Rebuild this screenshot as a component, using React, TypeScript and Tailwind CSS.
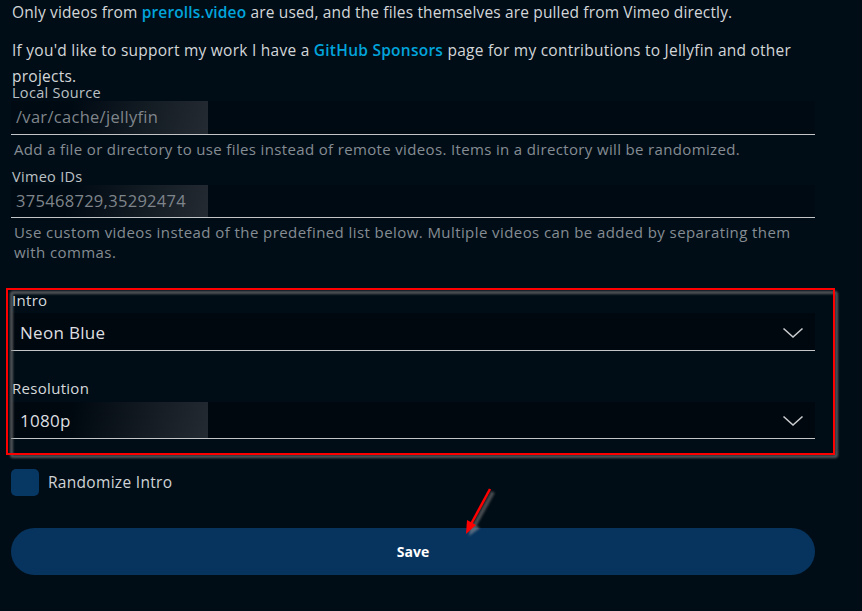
import React from "react";

const grad =
  "bg-[linear-gradient(105deg,rgba(40,46,54,0)_30%,rgba(40,46,54,0.9)_100%)] bg-no-repeat bg-[length:197px_100%]";

function Chevron() {
  return (
    <svg width="22" height="12" viewBox="0 0 22 12" className="shrink-0">
      <path d="M1.5 1.5 L11 10 L20.5 1.5" fill="none" stroke="#c9cbcd" strokeWidth="1.6" />
    </svg>
  );
}

export default function App() {
  return (
    <div className="relative min-h-[611px] w-full bg-[#010d16] font-['Open_Sans',sans-serif] text-[#d3d6d9] overflow-hidden">
      <div className="pl-[12px] w-[815px]">
        <p className="text-[15.5px] tracking-[0.15px] leading-[25px] h-[25px] whitespace-nowrap">
          Only videos from{" "}
          <span className="text-[#00a4dc] font-semibold">prerolls.video</span> are used, and the
          files themselves are pulled from Vimeo directly.
        </p>
        <p className="mt-[13px] text-[15.5px] tracking-[0.25px] leading-[25.5px] w-[795px]">
          If you'd like to support my work I have a{" "}
          <span className="text-[#00a4dc] font-semibold">GitHub Sponsors</span> page for my
          contributions to Jellyfin and other projects.
        </p>
      </div>
      <div className="pl-[11px] w-[815px]">
        <div className="mt-[-3px] h-[14px] leading-[14px] text-[14.5px] tracking-[0.3px] text-[#bcc1c5] pl-[1px]">
          Local Source
        </div>
        <div className={`mt-[1px] h-[34px] bg-[#000a12] ${grad} border-b border-[#c3c6c9] flex items-center pl-[5px] text-[16.5px] tracking-[0.3px] text-[#7f858b]`}>
          /var/cache/jellyfin
        </div>
        <div className="h-[29px] flex items-center pl-[3px] text-[15px] tracking-[0.35px] text-[#858c93] whitespace-nowrap">
          Add a file or directory to use files instead of remote videos. Items in a directory will be randomized.
        </div>
        <div className="mt-[5px] h-[16px] leading-[16px] text-[14.5px] tracking-[0.3px] text-[#bcc1c5] pl-[1px]">
          Vimeo IDs
        </div>
        <div className={`h-[33px] bg-[#000a12] ${grad} border-b border-[#c3c6c9] flex items-center pl-[5px] text-[16.5px] tracking-[0.3px] text-[#7f858b]`}>
          375468729,35292474
        </div>
        <div className="pt-[5px] pl-[3px] text-[15px] tracking-[0.42px] leading-[19.5px] text-[#858c93] w-[800px]">
          Use custom videos instead of the predefined list below. Multiple videos can be added by separating them with commas.
        </div>

        <div className="mt-[28px] h-[20px] leading-[20px] text-[15px] tracking-[0.3px] text-[#d6d9dc] pl-[1px]">Intro</div>
        <div className="mt-[3px] h-[38px] pt-[2px] bg-[#00080f] border-b border-[#c3c6c9] flex items-center justify-between pl-[9px] pr-[11px] text-[17px] tracking-[0.3px] text-[#dedfe0]">
          <span>Neon Blue</span>
          <Chevron />
        </div>
        <div className="mt-[27px] h-[20px] leading-[20px] text-[15px] tracking-[0.3px] text-[#d6d9dc] pl-[1px]">Resolution</div>
        <div className={`mt-[4px] h-[37px] pt-[1px] bg-[#00080f] ${grad} border-b border-[#c3c6c9] flex items-center justify-between pl-[9px] pr-[11px] text-[17px] tracking-[0.3px] text-[#dedfe0]`}>
          <span>1080p</span>
          <Chevron />
        </div>

        <div className="mt-[30px] flex items-center gap-[9px]">
          <div className="w-[28px] h-[27px] rounded-[5px] bg-[#073763]" />
          <span className="text-[15.5px] tracking-[0.3px] text-[#cfd3d6]">Randomize Intro</span>
        </div>

        <button className="mt-[32px] w-full h-[47px] rounded-full bg-[#07345e] text-white font-bold text-[14px]">
          Save
        </button>
      </div>

      {/* annotation: red box with shadow */}
      <div className="absolute left-[10px] top-[291px] w-[828px] h-[167px] border-[3px] border-[rgba(120,120,120,0.7)] rounded-[3px] blur-[1px]" />
      <div className="absolute left-[6px] top-[288px] w-[829px] h-[167px] border-2 border-[#ff0000]" />

      {/* annotation: arrow */}
      <svg className="absolute left-0 top-0 pointer-events-none" width="862" height="611">
        <g opacity="0.6" style={{ filter: "blur(1px)" }}>
          <line x1="493" y1="492" x2="472" y2="530" stroke="#777" strokeWidth="4" />
          <polygon points="469,536 471,523 480,528" fill="#8a8f96" />
        </g>
        <line x1="490" y1="489" x2="470" y2="526" stroke="#ff0000" strokeWidth="2.5" />
        <polygon points="466,534 467,520 476,525" fill="#ff0000" />
      </svg>
    </div>
  );
}
